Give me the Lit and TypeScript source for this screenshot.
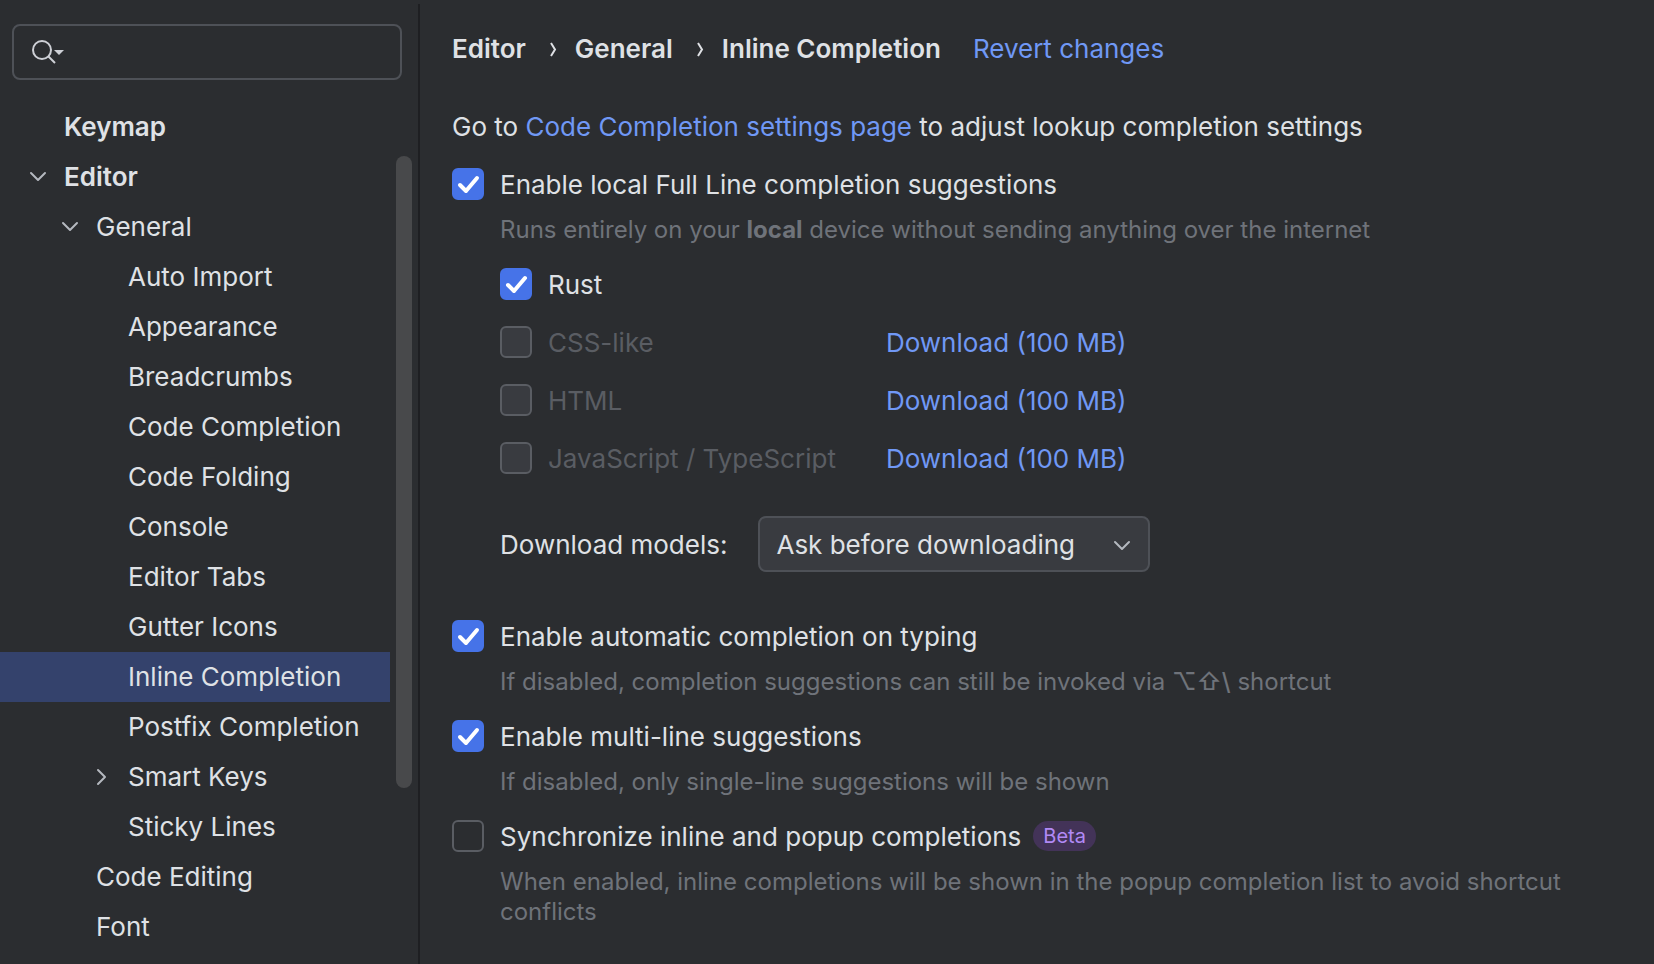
import { LitElement, html, css, svg, nothing } from "lit";
import { customElement, property, state } from "lit/decorators.js";
import { classMap } from "lit/directives/class-map.js";

interface TreeItem {
  label: string;
  level: number;
  bold?: boolean;
  arrow?: "open" | "closed";
}

const TREE: TreeItem[] = [
  { label: "Keymap", level: 0, bold: true },
  { label: "Editor", level: 0, bold: true, arrow: "open" },
  { label: "General", level: 1, arrow: "open" },
  { label: "Auto Import", level: 2 },
  { label: "Appearance", level: 2 },
  { label: "Breadcrumbs", level: 2 },
  { label: "Code Completion", level: 2 },
  { label: "Code Folding", level: 2 },
  { label: "Console", level: 2 },
  { label: "Editor Tabs", level: 2 },
  { label: "Gutter Icons", level: 2 },
  { label: "Inline Completion", level: 2 },
  { label: "Postfix Completion", level: 2 },
  { label: "Smart Keys", level: 2, arrow: "closed" },
  { label: "Sticky Lines", level: 2 },
  { label: "Code Editing", level: 1 },
  { label: "Font", level: 1 },
];

const LANGUAGES = [
  { id: "rust", label: "Rust", ready: true },
  { id: "css", label: "CSS-like", ready: false },
  { id: "html", label: "HTML", ready: false },
  { id: "js", label: "JavaScript / TypeScript", ready: false },
];

const CHEVRONS = {
  open: "M9 12L16 19L23 12",
  closed: "M12 9L19 16L12 23",
  combo: "M9 14L16 21L23 14",
};

const chevron = (kind: keyof typeof CHEVRONS) => svg`
  <svg class="chevron" viewBox="0 0 32 32" width="32" height="32" aria-hidden="true"
    fill="none" stroke="currentColor" stroke-width="2" stroke-linecap="round" stroke-linejoin="round">
    <path d=${CHEVRONS[kind]}></path>
  </svg>`;

@customElement("settings-check")
export class SettingsCheck extends LitElement {
  static styles = css`
    :host {
      display: block;
    }
    .row {
      display: flex;
      align-items: center;
      gap: 12px;
      height: 32px;
    }
    .label {
      display: flex;
      align-items: center;
      gap: 16px;
      white-space: nowrap;
    }
    .text {
      padding-top: 2px;
    }
    .box {
      display: grid;
      width: 32px;
      height: 32px;
      flex: none;
    }
    .input,
    .tick {
      grid-area: 1 / 1;
      width: 32px;
      height: 32px;
      margin: 0;
    }
    .input {
      appearance: none;
      box-sizing: border-box;
      border: 2px solid #5a5d63;
      border-radius: 6px;
      background: transparent;
    }
    .input:checked {
      border-color: #4673e8;
      background: #4673e8;
    }
    .input:disabled {
      background: #393b40;
    }
    .tick {
      pointer-events: none;
    }
    .disabled {
      color: #5a5d63;
    }
  `;

  @property() label = "";
  @property({ type: Boolean }) checked = false;
  @property({ type: Boolean }) disabled = false;

  render() {
    return html`<div class="row">
      <label class=${classMap({ label: true, disabled: this.disabled })}>
        <span class="box">
          <input
            class="input"
            type="checkbox"
            .checked=${this.checked}
            ?disabled=${this.disabled}
            @change=${(e: Event) => (this.checked = (e.target as HTMLInputElement).checked)}
          />
          ${this.checked
            ? html`<svg class="tick" viewBox="0 0 32 32" fill="none" stroke="#fff" stroke-width="4"
                stroke-linecap="round" stroke-linejoin="round" aria-hidden="true">
                <path d="M8 17L14 23L25 10"></path>
              </svg>`
            : nothing}
        </span>
        <span class="text">${this.label}</span>
      </label>
      <slot></slot>
    </div>`;
  }
}

@customElement("settings-tree")
export class SettingsTree extends LitElement {
  static styles = css`
    :host {
      display: flex;
      flex-direction: column;
      min-height: 0;
    }
    .search {
      display: flex;
      align-items: center;
      height: 56px;
      margin: 24px 16px 22px 12px;
      box-sizing: border-box;
      border: 2px solid #4e5157;
      border-radius: 8px;
      padding: 0 16px;
      gap: 8px;
    }
    .history {
      display: flex;
      padding: 0;
      border: 0;
      background: none;
      color: #ced0d6;
    }
    .query {
      flex: 1;
      min-width: 0;
      padding: 0;
      border: 0;
      outline: 0;
      background: none;
      color: inherit;
      font: inherit;
    }
    .body {
      flex: 1;
      min-height: 0;
      display: flex;
      gap: 6px;
      padding-right: 6px;
    }
    .list {
      flex: 1;
      min-width: 0;
      margin: 0;
      padding: 0;
      list-style: none;
      overflow: hidden;
    }
    .item {
      display: flex;
      align-items: center;
      width: 100%;
      height: 50px;
      padding: 0 0 0 22px;
      border: 0;
      background: none;
      color: inherit;
      font: inherit;
      text-align: left;
      white-space: nowrap;
    }
    .level1 {
      padding-left: 54px;
    }
    .level2 {
      padding-left: 86px;
    }
    .bold {
      font-weight: 600;
    }
    .selected {
      background: #34426c;
    }
    .arrow {
      display: flex;
      flex: none;
      width: 32px;
      margin-right: 10px;
      color: #b4b8bf;
    }
    .track {
      display: flex;
      flex-direction: column;
      width: 16px;
    }
    .thumb {
      border-radius: 8px;
      background: #48494b;
    }
  `;

  @state() private selected = "Inline Completion";
  private scroll = { before: 54, shown: 632, after: 176 };

  render() {
    return html`
      <div class="search">
        <button class="history" aria-label="Search history">
          <svg width="36" height="28" viewBox="0 0 36 28" fill="none" aria-hidden="true">
            <circle cx="12" cy="12" r="9" stroke="currentColor" stroke-width="2"></circle>
            <path d="M18.500 18.500L25 25" stroke="currentColor" stroke-width="2"></path>
            <path d="M24 12H34L29 17Z" fill="currentColor"></path>
          </svg>
        </button>
        <input class="query" type="search" aria-label="Search settings" />
      </div>
      <div class="body">
        <ul class="list">
          ${TREE.map(
            (t) => html`<li>
              <button
                class=${classMap({
                  item: true,
                  bold: !!t.bold,
                  level1: t.level === 1,
                  level2: t.level === 2,
                  selected: t.label === this.selected,
                })}
                @click=${() => (this.selected = t.label)}
              >
                <span class="arrow">${t.arrow ? chevron(t.arrow) : nothing}</span>
                <span>${t.label}</span>
              </button>
            </li>`
          )}
        </ul>
        <div class="track">
          <div style="flex: ${this.scroll.before}"></div>
          <div class="thumb" style="flex: ${this.scroll.shown}"></div>
          <div style="flex: ${this.scroll.after}"></div>
        </div>
      </div>
    `;
  }
}

@customElement("app-root")
export class AppRoot extends LitElement {
  static styles = css`
    :host {
      display: flex;
      height: 100vh;
      background: #2b2d30;
      color: #dfe1e5;
      font: 26px/32px Inter, "Noto Sans", sans-serif;
    }
    .sidebar {
      flex: none;
      width: 418px;
    }
    .divider {
      flex: none;
      width: 2px;
      margin-top: 4px;
      background: #1e1f22;
    }
    .page {
      flex: 1;
      min-width: 0;
      padding: 33px 80px 20px 32px;
      overflow: hidden;
    }
    .link {
      color: #7098f5;
      text-decoration: none;
    }
    .crumbs {
      display: flex;
      align-items: center;
      font-weight: 600;
      white-space: nowrap;
    }
    .sep {
      display: flex;
      padding: 0 18px 0 24px;
    }
    .revert {
      margin-left: 32px;
      font-weight: 400;
    }
    .intro {
      margin: 46px 0 25px;
    }
    .hint {
      margin: 15px 0 23px 48px;
      font-size: 24px;
      line-height: 30px;
      color: #6f737a;
    }
    .keys {
      font: inherit;
      font-weight: 500;
    }
    .languages {
      display: grid;
      grid-template-columns: max-content max-content;
      grid-auto-rows: 32px;
      column-gap: 50px;
      row-gap: 26px;
      margin-left: 48px;
    }
    .download {
      grid-column: 2;
      padding-top: 1px;
    }
    .lang {
      grid-column: 1;
    }
    .models {
      display: flex;
      align-items: center;
      gap: 31px;
      margin: 42px 0 48px 48px;
    }
    .caption {
      padding-top: 2px;
    }
    .combo {
      display: grid;
      align-items: center;
      width: 392px;
    }
    .select {
      grid-area: 1 / 1;
      appearance: none;
      width: 100%;
      height: 56px;
      padding: 2px 56px 0 16px;
      border: 2px solid #4e5157;
      border-radius: 8px;
      background: #393b40;
      color: inherit;
      font: inherit;
    }
    .combo .chevron {
      grid-area: 1 / 1;
      justify-self: end;
      margin-right: 12px;
      color: #b4b8bf;
      pointer-events: none;
    }
    .beta {
      padding: 0 10px;
      border-radius: 15px;
      background: #433358;
      color: #b189f5;
      font-size: 20px;
      line-height: 30px;
    }
  `;

  render() {
    const sep = html`<span class="sep">
      <svg width="7" height="15" viewBox="0 0 7 15" fill="none" aria-hidden="true">
        <path d="M1 1L5 7.500L1 14" stroke="currentColor" stroke-width="2"></path>
      </svg>
    </span>`;
    return html`
      <settings-tree class="sidebar"></settings-tree>
      <div class="divider"></div>
      <main class="page">
        <nav class="crumbs">
          <span>Editor</span>${sep}<span>General</span>${sep}<span>Inline Completion</span>
          <a class="link revert" href="#revert">Revert changes</a>
        </nav>
        <p class="intro">
          Go to <a class="link" href="#code-completion">Code Completion settings page</a> to adjust
          lookup completion settings
        </p>

        <settings-check checked label="Enable local Full Line completion suggestions"></settings-check>
        <p class="hint">
          Runs entirely on your <b>local</b> device without sending anything over the internet
        </p>
        <div class="languages">
          ${LANGUAGES.map(
            (l) => html`<settings-check
                class="lang"
                label=${l.label}
                ?checked=${l.ready}
                ?disabled=${!l.ready}
              ></settings-check>
              ${l.ready
                ? nothing
                : html`<a class="link download" href="#download-${l.id}">Download (100 MB)</a>`}`
          )}
        </div>
        <div class="models">
          <label class="caption" for="models">Download models:</label>
          <div class="combo">
            <select class="select" id="models">
              <option>Ask before downloading</option>
            </select>
            ${chevron("combo")}
          </div>
        </div>

        <settings-check checked label="Enable automatic completion on typing"></settings-check>
        <p class="hint">
          If disabled, completion suggestions can still be invoked via
          <kbd class="keys">⌥⇧\\</kbd> shortcut
        </p>
        <settings-check checked label="Enable multi-line suggestions"></settings-check>
        <p class="hint">If disabled, only single-line suggestions will be shown</p>
        <settings-check label="Synchronize inline and popup completions">
          <span class="beta">Beta</span>
        </settings-check>
        <p class="hint">
          When enabled, inline completions will be shown in the popup completion list to avoid
          shortcut conflicts
        </p>
      </main>
    `;
  }
}
